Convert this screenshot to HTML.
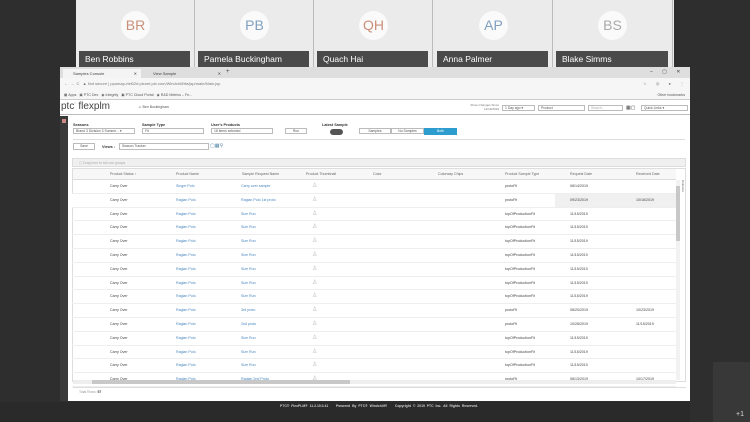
<!DOCTYPE html>
<html><head><meta charset="utf-8"><style>
*{margin:0;padding:0;box-sizing:border-box}
body{width:750px;height:422px;background:#2e2e2e;position:relative;overflow:hidden;font-family:"Liberation Sans",sans-serif;font-size:4px;color:#444}
.a{position:absolute}
.tile{position:absolute;top:0;width:119px;height:67px;background:#ebebeb;border-right:1px solid #bbb}
.av{position:absolute;left:45px;top:11px;width:29px;height:29px;border-radius:50%;background:#fafafa;font-size:14px;line-height:29px;text-align:center}
.nm{position:absolute;left:3px;right:4px;top:51px;height:16px;background:#4a4a4a;color:#fff;font-size:8.5px;line-height:16px;padding-left:6px}
.row{position:absolute;left:72px;width:604px;height:13.8px;border-bottom:1px solid #eee;font-size:3.6px;line-height:13px}
.row span{position:absolute}
.lk{color:#4a86c0}
.th{position:absolute;top:172px;font-size:3.6px;color:#666}
.lbl{font-size:3.8px;font-weight:bold;color:#333}
.sel{position:absolute;height:6px;border:1px solid #bbb;background:#fff;font-size:3.4px;line-height:5px;padding-left:2px;color:#555}
</style></head><body>
<div class="a" style="left:76px;top:0;width:598px;height:67px;background:#ebebeb"></div>
<div class="tile" style="left:76px"><div class="av" style="color:#c9907a">BR</div><div class="nm">Ben Robbins</div></div>
<div class="tile" style="left:195px"><div class="av" style="color:#7fa0c0">PB</div><div class="nm">Pamela Buckingham</div></div>
<div class="tile" style="left:314px"><div class="av" style="color:#c9907a">QH</div><div class="nm">Quach Hai</div></div>
<div class="tile" style="left:434px"><div class="av" style="color:#7fa0c0">AP</div><div class="nm">Anna Palmer</div></div>
<div class="tile" style="left:553px;width:120px"><div class="av" style="color:#aaa">BS</div><div class="nm">Blake Simms</div></div>

<!-- browser -->
<div class="a" style="left:60px;top:67px;width:630px;height:334px;background:#fff"></div>
<div class="a" style="left:60px;top:67px;width:630px;height:11px;background:#dedede"></div>
<div class="a" style="left:63px;top:69px;width:78px;height:9px;background:#f4f4f4;font-size:4px;line-height:9px;padding-left:10px">Samples Console<span style="position:absolute;right:4px">✕</span></div>
<div class="a" style="left:143px;top:69px;width:82px;height:9px;font-size:4px;line-height:9px;padding-left:10px">View Sample<span style="position:absolute;right:4px">✕</span></div>
<div class="a" style="left:226px;top:69px;font-size:6px">+</div>
<div class="a" style="left:650px;top:69px;font-size:5px;word-spacing:8px">– ▢ ✕</div>
<div class="a" style="left:60px;top:78px;width:630px;height:12px;background:#f6f6f6;font-size:4px;line-height:12px;padding-left:4px;color:#777">←&nbsp; → &nbsp;C &nbsp; ▲ Not secure | ppumap-rtel02d.ptcnet.ptc.com/Windchill/rfa/jsp/main/Main.jsp<span style="position:absolute;right:6px;word-spacing:8px">☆ ◎ ● ⋮</span></div>
<div class="a" style="left:60px;top:90px;width:630px;height:10px;background:#f6f6f6;border-bottom:1px solid #ccc;font-size:3.6px;line-height:10px;padding-left:4px;color:#555">▦ Apps &nbsp; ▣ PTC Dev &nbsp; ◉ Integrity &nbsp; ▣ PTC Cloud Portal &nbsp; ◉ R&amp;D Metrics – Fe...<span style="position:absolute;right:5px">Other bookmarks</span></div>
<div class="a" style="left:60px;top:100px;width:630px;height:15px;border-bottom:1px solid #bbb"></div>
<div class="a" style="left:61px;top:101px;font-size:10px;color:#444">ptc<sup style="font-size:3px">°</sup> flexplm<sup style="font-size:3px">·</sup></div>
<div class="a" style="left:138px;top:105px;font-size:3.5px;color:#555">☺ Ben Buckingham</div>
<div class="a" style="left:466px;top:103px;font-size:3px;color:#777;text-align:right;width:33px">Show Changes Since<br>12/16/2019</div>
<div class="sel" style="left:502px;top:105px;width:33px">1 Day ago ▾</div>
<div class="sel" style="left:538px;top:105px;width:47px">Product</div>
<div class="sel" style="left:588px;top:105px;width:35px;color:#aaa">Search...</div>
<div class="a" style="left:626px;top:105px;font-size:5px">▦▢</div>
<div class="sel" style="left:641px;top:105px;width:47px">Quick Links ▾</div>
<!-- left rail -->
<div class="a" style="left:60px;top:116px;width:8px;height:285px;background:#3a3a3a"></div>
<div class="a" style="left:62px;top:119px;width:4px;height:4px;background:#c88"></div>
<!-- filters -->
<div class="a lbl" style="left:73px;top:123px">Seasons</div>
<div class="sel" style="left:73px;top:128px;width:62px">Brand 3 Division 3 Summe... ▾</div>
<div class="a lbl" style="left:142px;top:123px">Sample Type</div>
<div class="sel" style="left:142px;top:128px;width:62px">Fit</div>
<div class="a lbl" style="left:211px;top:123px">User's Products</div>
<div class="sel" style="left:211px;top:128px;width:62px">18 items selected</div>
<div class="sel" style="left:285px;top:128px;width:22px;text-align:center;padding:0">Run</div>
<div class="a lbl" style="left:322px;top:123px">Latest Sample</div>
<div class="a" style="left:330px;top:129px;width:13px;height:6px;border-radius:3px;background:#555"></div>
<div class="sel" style="left:359px;top:128px;width:32px;text-align:center;padding:0">Samples</div>
<div class="sel" style="left:391px;top:128px;width:33px;text-align:center;padding:0">No Samples</div>
<div class="a" style="left:424px;top:128px;width:33px;height:7px;background:#2d9ccf;color:#fff;font-size:3.4px;text-align:center;line-height:7px">Both</div>
<div class="a" style="left:73px;top:139px;width:612px;border-top:1px solid #ddd"></div>
<div class="sel" style="left:73px;top:143px;width:22px;height:7px;text-align:center;padding:0">Save</div>
<div class="a lbl" style="left:102px;top:145px">Views :</div>
<div class="sel" style="left:119px;top:143px;width:90px;height:7px">Season Tracker</div>
<div class="a" style="left:210px;top:143px;font-size:5px;color:#5588aa">▢▦⚲</div>
<!-- grid -->
<div class="a" style="left:72px;top:158px;width:614px;height:9px;background:#f0f0f0;border:1px solid #ddd;font-size:3.4px;line-height:8px;padding-left:6px;color:#aaa">▢ Drag here to set row groups</div>
<div class="a" style="left:72px;top:168px;width:614px;height:214px;border:1px solid #ddd"></div>
<div class="a" style="left:73px;top:169px;width:603px;height:11px;background:#f7f7f7;border-bottom:1px solid #ddd"></div>
<div class="th" style="left:110px">Product Status ↑</div>
<div class="th" style="left:176px">Product Name</div>
<div class="th" style="left:242px">Sample Request Name</div>
<div class="th" style="left:306px">Product Thumbnail</div>
<div class="th" style="left:373px">Color</div>
<div class="th" style="left:438px">Colorway Chips</div>
<div class="th" style="left:505px">Product Sample Type</div>
<div class="th" style="left:570px">Request Date</div>
<div class="th" style="left:636px">Received Date</div>
<div class="a" style="left:676px;top:180px;width:4px;height:200px;background:#f2f2f2"></div>
<div class="a" style="left:676px;top:186px;width:4px;height:55px;background:#c8c8c8"></div>
<div class="a" style="left:681px;top:180px;font-size:3px;writing-mode:vertical-rl;color:#555">Columns</div>
<div id="rows"></div>
<div class="a" style="left:73px;top:380px;width:603px;height:4px;background:#eee"></div>
<div class="a" style="left:92px;top:380px;width:258px;height:4px;background:#c8c8c8"></div>
<div class="a" style="left:73px;top:387px;width:613px;border-top:1px solid #ddd"></div>
<div class="a" style="left:79px;top:390px;font-size:3.4px;color:#999">Total Rows: <b style="color:#444">57</b></div>
<!-- footer -->
<div class="a" style="left:0;top:402px;width:690px;height:20px;background:#2a2a2a"></div>
<div class="a" style="left:280px;top:404px;font-size:3.4px;color:#ccc;font-weight:bold;word-spacing:1px">PTC® FlexPLM® 11.2.10.0.41 &nbsp;&nbsp; Powered By PTC® Windchill® &nbsp;&nbsp; Copyright © 2019 PTC Inc. All Rights Reserved.</div>
<div class="a" style="left:713px;top:362px;width:37px;height:60px;background:#383838"></div>
<div class="a" style="left:736px;top:411px;font-size:7px;color:#ddd">+1</div>
<script>
var d=[["Singer Polo","Carry over sample","protoFit","08/14/2019",""],["Raglan Polo","Raglan Polo 1st proto","protoFit","09/23/2019","10/16/2019"]];
for(var i=0;i<7;i++)d.push(["Raglan Polo","Size Run","topOfProductionFit","11/15/2019",""]);
d.push(["Raglan Polo","3rd proto","protoFit","08/20/2019","10/23/2019"]);
d.push(["Raglan Polo","2nd proto","protoFit","10/28/2019","11/15/2019"]);
d.push(["Raglan Polo","Size Run","topOfProductionFit","11/15/2019",""]);
d.push(["Raglan Polo","Size Run","topOfProductionFit","11/15/2019",""]);
d.push(["Raglan Polo","Size Run","topOfProductionFit","11/15/2019",""]);
d.push(["Raglan Polo","Raglan 2nd Proto","protoFit","08/13/2019","10/17/2019"]);
var h="";for(var i=0;i<d.length;i++){var y=180+i*13.8;var r=d[i];
h+='<div class="row" style="top:'+y+'px;'+(i==1?'background:linear-gradient(90deg,#fff 80%,#f0f0f0 80%)':'')+'"><span style="left:38px">Carry Over</span><span class="lk" style="left:104px">'+r[0]+'</span><span class="lk" style="left:169px">'+r[1]+'</span><span style="left:240px;color:#bbb;font-size:6px">♙</span><span style="left:433px">'+r[2]+'</span><span style="left:498px">'+r[3]+'</span><span style="left:564px">'+r[4]+'</span></div>';}
document.getElementById("rows").innerHTML=h;
</script>
</body></html>
